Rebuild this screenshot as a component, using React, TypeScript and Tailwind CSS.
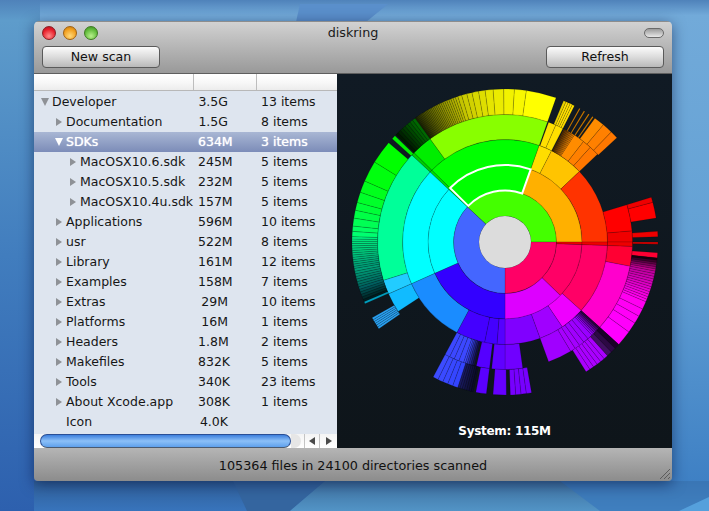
import React from "react";

type Seg = [number, number, number, string];

const RADII = [26, 51.5, 77, 102.5, 127.5, 153];
const CX = 168;
const CY = 168;

function pt(r: number, a: number) {
  const t = (a * Math.PI) / 180;
  return `${(CX + r * Math.sin(t)).toFixed(2)} ${(CY - r * Math.cos(t)).toFixed(2)}`;
}

function sector(ring: number, a0: number, a1: number) {
  const r0 = RADII[ring];
  const r1 = RADII[ring + 1];
  const large = a1 - a0 > 180 ? 1 : 0;
  return `M${pt(r0, a0)} L${pt(r1, a0)} A${r1} ${r1} 0 ${large} 1 ${pt(r1, a1)} L${pt(r0, a1)} A${r0} ${r0} 0 ${large} 0 ${pt(r0, a0)} Z`;
}

function mix(c0: string, c1: string, t: number) {
  const n0 = parseInt(c0.slice(1), 16);
  const n1 = parseInt(c1.slice(1), 16);
  const part = (s: number) => {
    const a = (n0 >> s) & 255;
    const b = (n1 >> s) & 255;
    return Math.round(a + (b - a) * t);
  };
  return `rgb(${part(16)},${part(8)},${part(0)})`;
}

// thin slices, shrinking from a0 toward a1
function fan(ring: number, a0: number, a1: number, n: number, c0: string, c1: string, ratio = 1): Seg[] {
  const out: Seg[] = [];
  let total = 0;
  for (let i = 0; i < n; i++) total += Math.pow(ratio, i);
  let a = a0;
  for (let i = 0; i < n; i++) {
    const next = a + ((a1 - a0) * Math.pow(ratio, i)) / total;
    out.push([ring, a, next, mix(c0, c1, i / (n - 1 || 1))]);
    a = next;
  }
  return out;
}

function steps(ring: number, stops: number[], c0: string, c1: string): Seg[] {
  return stops.slice(0, -1).map((a, i) => {
    const b = stops[i + 1];
    return [ring, Math.min(a, b), Math.max(a, b), mix(c0, c1, i / (stops.length - 2))] as Seg;
  });
}

const segments: Seg[] = [
  [0, -47, 90, "#44ff00"],
  [0, 90, 180, "#ff0066"],
  [0, 180, 313, "#4466ff"],

  [1, -47, -45.5, "#00dd00"],
  [1, -45.5, 19.5, "#00ff00"],
  [1, 19.5, 90, "#ffb000"],
  [1, 90, 92, "#ee0000"],
  [1, 92, 134, "#ff0066"],
  [1, 134, 180, "#dd00ff"],
  [1, 180, 246, "#3300ff"],
  [1, 246, 313, "#00ffff"],

  [2, -47, -45.5, "#00dd00"],
  [2, -45.5, 19.5, "#00ff00"],
  [2, 19.5, 27, "#ffdd00"],
  [2, 27, 46.5, "#ffc400"],
  [2, 46.5, 90, "#ff3300"],
  [2, 90, 92, "#ee0000"],
  [2, 92, 132, "#ff0066"],
  [2, 132, 146, "#ee00ff"],
  [2, 146, 160, "#a000ff"],
  [2, 160, 180, "#8000ff"],
  [2, 180, 184.5, "#5500ff"],
  [2, 184.5, 191.5, "#4400ff"],
  [2, 191.5, 208, "#4400ff"],
  [2, 208, 246, "#1a8cff"],
  [2, 246, 313, "#00ffff"],

  [3, -47, -45.5, "#00cc00"],
  [3, -45.5, -36, "#00ee00"],
  [3, -36, 19.5, "#88ff00"],
  [3, 20, 23.5, "#ffe000"],
  [3, 23.5, 27, "#ffe000"],
  ...fan(3, 27.5, 33, 10, "#5a3000", "#ff8c00"),
  [3, 33, 38, "#ff8c00"],
  [3, 38, 42, "#ff8000"],
  [3, 42, 46.5, "#ff7800"],
  [3, 73, 85, "#ff0000"],
  [3, 85, 90, "#f00000"],
  [3, 90, 92, "#ee0000"],
  [3, 92, 101, "#ff0033"],
  [3, 101, 132, "#ff00cc"],
  ...fan(3, 132, 137, 6, "#2a0040", "#9900ff"),
  ...fan(3, 137, 149, 5, "#9900ff", "#a800ff"),
  [3, 149, 160, "#a000ff"],
  [3, 172, 180, "#7000ff"],
  [3, 180, 186, "#6000ff"],
  [3, 187, 193, "#5500ff"],
  ...fan(3, 194, 199, 6, "#14104a", "#3c48ff"),
  ...fan(3, 199, 208, 4, "#3c48ff", "#3c48ff"),
  [3, 237, 246, "#11bbff"],
  [3, 246, 252.5, "#22ccff"],
  [3, 252.5, 313, "#00ff99"],

  // top yellow band, widest on the right
  ...steps(4, [19.5, 8, 3.5, -0.5, -4.5, -7.5, -10, -12.5, -14.5, -16.5, -18], "#ffff00", "#c4c400"),
  ...fan(4, -36, -18, 28, "#202800", "#b8b800", 1.03),
  ...fan(4, -45.5, -36, 8, "#001800", "#006800"),
  [4, -47.5, -46, "#00ee00"],
  ...steps(4, [-88, -86, -84, -81, -78, -75, -71, -66.5, -58.5, -49.5], "#00ff70", "#00ff00"),
  ...fan(4, -100, -88, 14, "#00a078", "#00f080"),
  ...fan(4, -107, -100, 7, "#006a60", "#00a078"),
  ...fan(4, -113, -107, 6, "#001c1e", "#006060"),
  [4, 246.2, 247, "#00a0c0"],
  ...fan(4, 235.5, 240.3, 6, "#2aa0f0", "#2aa0f0"),
  [4, 22.5, 23.5, "#e8d000"],
  ...fan(4, 23.5, 27, 4, "#ffe000", "#ffe000"),
  [4, 29, 29.5, "#cc7a00"],
  [4, 31, 31.5, "#cc7a00"],
  [4, 33, 33.5, "#cc7a00"],
  [4, 34.8, 35.3, "#cc7a00"],
  [4, 36, 40, "#ff8c00"],
  [4, 40, 44, "#ff8000"],
  [4, 44, 47, "#ff7800"],
  [4, 73, 75, "#ee0000"],
  [4, 75, 81, "#ff0000"],
  [4, 86, 88, "#ee0000"],
  [4, 90, 90.8, "#cc0000"],
  [4, 94, 96, "#ff0033"],
  ...fan(4, 96, 101, 6, "#180010", "#c00090"),
  ...fan(4, 101, 113, 12, "#c000a0", "#ff00ee"),
  ...steps(4, [113, 116, 119, 122, 126, 132], "#ff00f0", "#ff00ff"),
  ...fan(4, 132, 138, 3, "#1a0028", "#401060"),
  ...fan(4, 138, 148, 6, "#aa00ff", "#aa00ff"),
  ...fan(4, 170, 178, 4, "#7700ff", "#7700ff"),
  [4, 179.5, 184.5, "#6600ff"],
  [4, 187, 191, "#5a00ff"],
  ...fan(4, 192, 198, 7, "#0c0c28", "#1a1a60"),
  ...fan(4, 198, 208, 5, "#3344ff", "#3c4cff"),
];

function Sunburst() {
  return (
    <svg width="335" height="374" viewBox="0 0 335 374" className="block">
      {segments.map((s, i) => (
        <path key={i} d={sector(s[0], s[1], s[2])} fill={s[3]} stroke="#000" strokeOpacity="0.3" strokeWidth="0.5" />
      ))}
      <path d={sector(1, -45.5, 19.5)} fill="none" stroke="#fff" strokeWidth="2" />
      <circle cx={CX} cy={CY} r="26" fill="#dcdcdc" />
    </svg>
  );
}

type Row = { name: string; size: string; items: string; level: number; arrow?: "open" | "closed"; selected?: boolean };

const rows: Row[] = [
  { name: "Developer", size: "3.5G", items: "13 items", level: 0, arrow: "open" },
  { name: "Documentation", size: "1.5G", items: "8 items", level: 1, arrow: "closed" },
  { name: "SDKs", size: "634M", items: "3 items", level: 1, arrow: "open", selected: true },
  { name: "MacOSX10.6.sdk", size: "245M", items: "5 items", level: 2, arrow: "closed" },
  { name: "MacOSX10.5.sdk", size: "232M", items: "5 items", level: 2, arrow: "closed" },
  { name: "MacOSX10.4u.sdk", size: "157M", items: "5 items", level: 2, arrow: "closed" },
  { name: "Applications", size: "596M", items: "10 items", level: 1, arrow: "closed" },
  { name: "usr", size: "522M", items: "8 items", level: 1, arrow: "closed" },
  { name: "Library", size: "161M", items: "12 items", level: 1, arrow: "closed" },
  { name: "Examples", size: "158M", items: "7 items", level: 1, arrow: "closed" },
  { name: "Extras", size: "29M", items: "10 items", level: 1, arrow: "closed" },
  { name: "Platforms", size: "16M", items: "1 items", level: 1, arrow: "closed" },
  { name: "Headers", size: "1.8M", items: "2 items", level: 1, arrow: "closed" },
  { name: "Makefiles", size: "832K", items: "5 items", level: 1, arrow: "closed" },
  { name: "Tools", size: "340K", items: "23 items", level: 1, arrow: "closed" },
  { name: "About Xcode.app", size: "308K", items: "1 items", level: 1, arrow: "closed" },
  { name: "Icon", size: "4.0K", items: "", level: 1 },
];

function Arrow({ kind, light }: { kind?: "open" | "closed"; light?: boolean }) {
  const color = light ? "#ffffff" : "#8e9196";
  return (
    <svg width="11" height="10" viewBox="0 0 11 10" className="shrink-0">
      {kind === "open" && <polygon points="0,1 8,1 4,9" fill={color} />}
      {kind === "closed" && <polygon points="1,1 7,5 1,9" fill={color} />}
    </svg>
  );
}

function TableRow({ row }: { row: Row }) {
  const pad = row.level === 0 ? "pl-[7px]" : row.level === 1 ? "pl-[21px]" : "pl-[35px]";
  return (
    <div
      className={
        "flex h-5 items-center " +
        (row.selected
          ? "bg-gradient-to-b from-[#a9b7d4] to-[#7c8cb8] text-white [text-shadow:0_0_1px_#fff]"
          : "text-[#161616]")
      }
    >
      <div className={"flex w-[164px] items-center whitespace-nowrap " + pad}>
        <Arrow kind={row.arrow} light={row.selected} />
        <span>{row.name}</span>
      </div>
      <div className="w-[30px] text-right">{row.size}</div>
      <div className="ml-[33px]">{row.items}</div>
    </div>
  );
}

function AquaButton({ label }: { label: string }) {
  return (
    <div className="flex h-[22px] w-[118px] items-center justify-center rounded-[4px] border border-[#5a5a5a] bg-gradient-to-b from-[#fbfbfb] via-[#dcdcdc] to-[#b9b9b9] text-[12.6px] text-[#111]">
      {label}
    </div>
  );
}

function Wallpaper() {
  return (
    <svg width="709" height="511" viewBox="0 0 709 511" className="absolute inset-0">
      <defs>
        <linearGradient id="wall" x1="0" y1="0" x2="0" y2="1">
          <stop offset="0" stopColor="#4f82ba" />
          <stop offset="0.03" stopColor="#72aad9" />
          <stop offset="0.5" stopColor="#62a0d4" />
          <stop offset="1" stopColor="#3a7cc2" />
        </linearGradient>
        <linearGradient id="side" x1="0" y1="0" x2="0" y2="1">
          <stop offset="0" stopColor="#4f82ba" />
          <stop offset="0.04" stopColor="#5e9ccb" />
          <stop offset="0.5" stopColor="#417dbe" />
          <stop offset="1" stopColor="#2d60ae" />
        </linearGradient>
        <linearGradient id="under" x1="0" y1="0" x2="0" y2="1">
          <stop offset="0" stopColor="#2f5f98" />
          <stop offset="1" stopColor="#3874bc" />
        </linearGradient>
        <linearGradient id="wedge" x1="0" y1="0" x2="0" y2="1">
          <stop offset="0" stopColor="#3d6f9e" />
          <stop offset="1" stopColor="#5294c6" />
        </linearGradient>
      </defs>
      <rect width="709" height="511" fill="url(#wall)" />
      <rect width="40" height="511" fill="url(#side)" />
      <polygon points="300,4 388,4 366,22 296,22" fill="#5a8fcb" />
      <rect x="34" y="481" width="300" height="30" fill="url(#under)" />
      <polygon points="233,481 325,481 290,511 247,511" fill="#34659f" />
      <polygon points="325,481 672,481 709,481 709,511 290,511" fill="url(#wedge)" />
      <polygon points="560,481 709,481 709,511 600,511" fill="#3a78bc" opacity="0.75" />
      <polygon points="709,497 709,511 679,511" fill="#55a0dc" />
    </svg>
  );
}

function App() {
  return (
    <div className="relative h-[511px] w-[709px] overflow-hidden pl-[34px] pt-[21px] font-['DejaVu_Sans',sans-serif] text-[12.5px]">
      <Wallpaper />
      <div className="relative flex h-[460px] w-[638px] flex-col overflow-hidden rounded-t-[5px] rounded-b-[4px] shadow-[0_3px_14px_rgba(0,10,50,0.5)]">
        <div className="flex h-[53px] shrink-0 flex-col border-t border-[#8d8d8d] border-b border-b-[#5e5e5e] bg-gradient-to-b from-[#d2d2d2] to-[#999999] px-2">
          <div className="flex h-[22px] items-center">
            <div className="flex flex-1 gap-[7px]">
              <span className="h-[14px] w-[14px] rounded-full border border-[#8a1c22] bg-[radial-gradient(circle_at_50%_75%,#ff8c8c,#e8202c_60%,#b0101c)]" />
              <span className="h-[14px] w-[14px] rounded-full border border-[#a06010] bg-[radial-gradient(circle_at_50%_75%,#ffd97a,#f2a020_60%,#c07810)]" />
              <span className="h-[14px] w-[14px] rounded-full border border-[#3d7a20] bg-[radial-gradient(circle_at_50%_75%,#b8f08c,#62bc3c_60%,#3c8a20)]" />
            </div>
            <span className="text-[12.75px] text-[#1a1a1a]">diskring</span>
            <div className="flex flex-1 justify-end">
              <span className="h-[10px] w-5 rounded-full border border-[#6a6a6a] bg-gradient-to-b from-[#9a9a9a] to-[#e8e8e8]" />
            </div>
          </div>
          <div className="mt-[2px] flex justify-between">
            <AquaButton label="New scan" />
            <AquaButton label="Refresh" />
          </div>
        </div>

        <div className="flex h-[374px] shrink-0">
          <div className="flex w-[303px] shrink-0 flex-col bg-[#dee5ef]">
            <div className="flex h-[17px] shrink-0 border-b border-[#b8b8b8] bg-gradient-to-b from-[#ffffff] via-[#f8f8f8] to-[#ececec]">
              <div className="w-[160px] border-r border-[#bdbdbd]" />
              <div className="w-[63px] border-r border-[#bdbdbd]" />
            </div>
            <div className="flex-1 overflow-hidden pt-px">
              {rows.map((r) => (
                <TableRow key={r.name} row={r} />
              ))}
            </div>
            <div className="flex h-[14px] shrink-0 items-center bg-gradient-to-b from-[#f4f4f4] to-[#ffffff]">
              <div className="ml-[6px] h-[14px] w-[251px] rounded-full border border-[#2a4f96] border-b-[#4a5a70] bg-gradient-to-b from-[#3d7fdc] via-[#8cc0f8] to-[#5ea0ec]" />
              <div className="h-[14px] w-[10px] rounded-r-full bg-[#e6e6e6]" />
              <div className="ml-auto flex h-[14px] text-[#4a4a4a]">
                <div className="flex w-4 items-center justify-center border-x border-[#c4c4c4]">
                  <svg width="6" height="8" viewBox="0 0 6 8"><polygon points="6,0 0,4 6,8" fill="currentColor" /></svg>
                </div>
                <div className="flex w-[17px] items-center justify-center">
                  <svg width="6" height="8" viewBox="0 0 6 8"><polygon points="0,0 6,4 0,8" fill="currentColor" /></svg>
                </div>
              </div>
            </div>
          </div>
          <div className="relative flex-1 bg-gradient-to-b from-[#101a24] to-[#0e151a]">
            <Sunburst />
            <div className="absolute inset-x-0 top-[348px] text-center text-[12px] font-bold tracking-[-0.3px] text-white">
              System: 115M
            </div>
          </div>
        </div>

        <div className="relative flex flex-1 items-center justify-center bg-gradient-to-b from-[#b5b5b5] to-[#8c8c8c] pt-[3px] text-[12.75px] text-[#111]">
          105364 files in 24100 directories scanned
          <svg width="11" height="11" viewBox="0 0 11 11" className="absolute bottom-[2px] right-[2px]">
            <path d="M1 11 L11 1 M5 11 L11 5 M9 11 L11 9" stroke="#5c5c5c" strokeWidth="1" />
          </svg>
        </div>
      </div>
    </div>
  );
}

export default App;
